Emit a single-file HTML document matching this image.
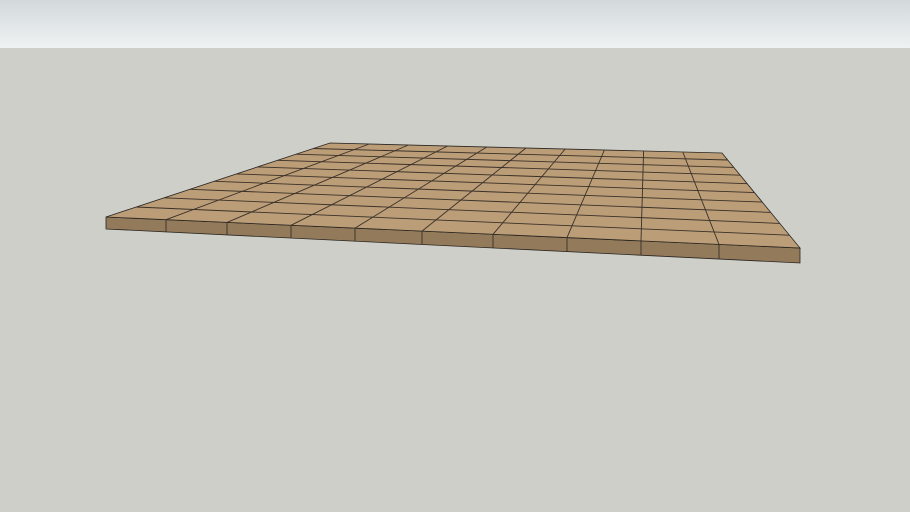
<!DOCTYPE html>
<html><head><style>
html,body{margin:0;padding:0;width:910px;height:512px;overflow:hidden;background:#cfcfca}
.sky{position:absolute;left:0;top:0;width:910px;height:48px;background:linear-gradient(#d3d8db,#eef2f2)}
svg{position:absolute;left:0;top:0}
</style></head><body>
<div class="sky"></div>
<svg width="910" height="512" viewBox="0 0 910 512">
<polygon points="106,217 800,248 800,263 106,229" fill="#927a5b" stroke="#2a2520" stroke-width="0.8"/>
<polygon points="330,143 722,153 800,248 106,217" fill="#bb9d78" stroke="#2a2520" stroke-width="0.8"/>
<g stroke="#3a3028" stroke-width="0.9" fill="none">
<line x1="313.4" y1="148.5" x2="727.8" y2="160"/>
<line x1="295.9" y1="154.2" x2="733.9" y2="167.4"/>
<line x1="277.6" y1="160.3" x2="740.3" y2="175.2"/>
<line x1="257.6" y1="166.9" x2="747.2" y2="183.7"/>
<line x1="236.6" y1="173.9" x2="754.5" y2="192.6"/>
<line x1="214.2" y1="181.3" x2="762.3" y2="202.1"/>
<line x1="190" y1="189.3" x2="770.8" y2="212.4"/>
<line x1="164" y1="197.8" x2="779.8" y2="223.4"/>
<line x1="136.2" y1="207" x2="789.5" y2="235.2"/>
<line x1="369.2" y1="144" x2="166" y2="219.7"/>
<line x1="408.4" y1="145" x2="227" y2="222.4"/>
<line x1="447.6" y1="146" x2="291" y2="225.3"/>
<line x1="486.8" y1="147" x2="355" y2="228.1"/>
<line x1="526" y1="148" x2="422" y2="231.1"/>
<line x1="565.2" y1="149" x2="493" y2="234.3"/>
<line x1="604.4" y1="150" x2="567" y2="237.6"/>
<line x1="643.6" y1="151" x2="641" y2="240.9"/>
<line x1="682.8" y1="152" x2="719" y2="244.4"/>
<line x1="166" y1="219.7" x2="166" y2="231.9"/>
<line x1="227" y1="222.4" x2="227" y2="234.9"/>
<line x1="291" y1="225.3" x2="291" y2="238.1"/>
<line x1="355" y1="228.1" x2="355" y2="241.2"/>
<line x1="422" y1="231.1" x2="422" y2="244.5"/>
<line x1="493" y1="234.3" x2="493" y2="248"/>
<line x1="567" y1="237.6" x2="567" y2="251.6"/>
<line x1="641" y1="240.9" x2="641" y2="255.2"/>
<line x1="719" y1="244.4" x2="719" y2="259"/>
</g>
</svg>
</body></html>
